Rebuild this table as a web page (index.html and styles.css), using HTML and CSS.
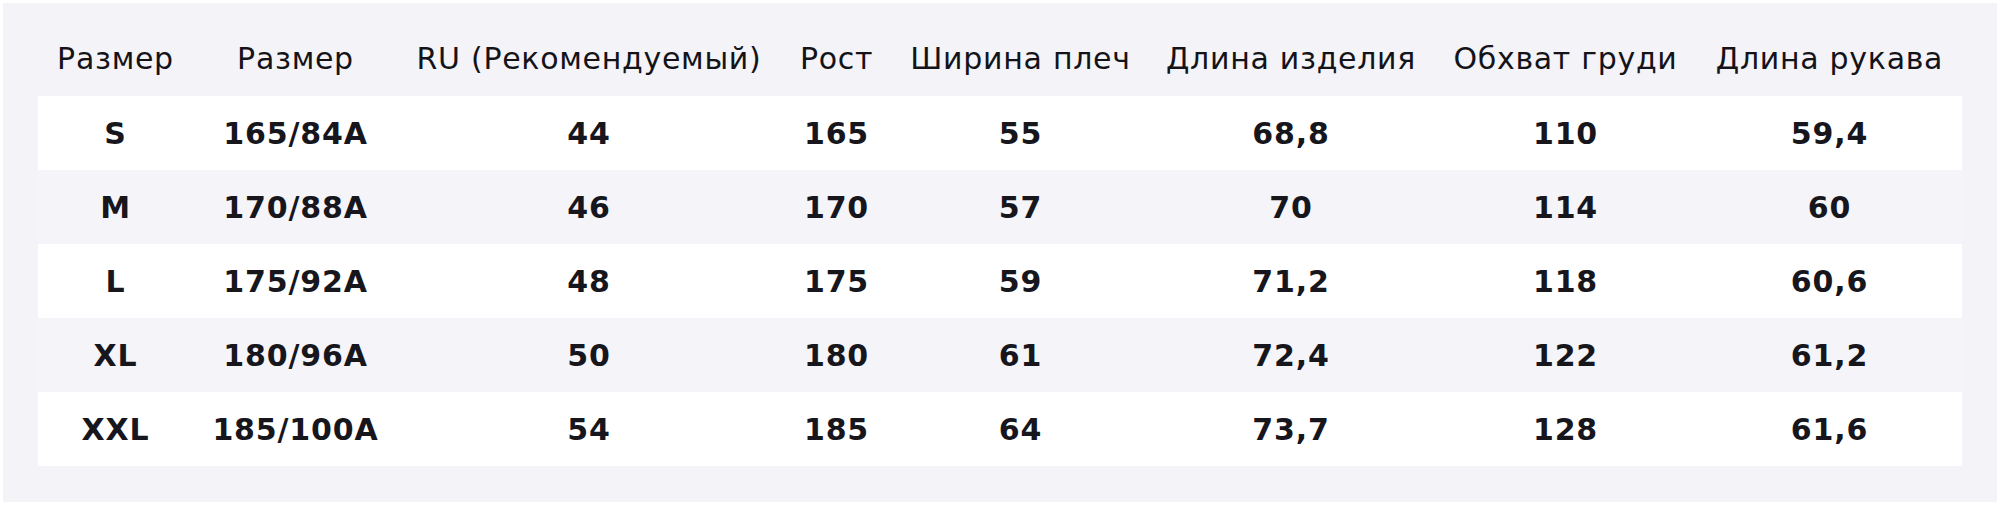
FILE: index.html
```html
<!DOCTYPE html>
<html lang="ru">
<head>
<meta charset="utf-8">
<title>Таблица размеров</title>
<link rel="stylesheet" href="styles.css">
</head>
<body>
<div class="panel">
  <table class="sizes">
    <colgroup>
      <col class="c1"><col class="c2"><col class="c3"><col class="c4">
      <col class="c5"><col class="c6"><col class="c7"><col class="c8">
    </colgroup>
    <thead>
      <tr>
        <th>Размер</th><th>Размер</th><th>RU (Рекомендуемый)</th><th>Рост</th>
        <th>Ширина плеч</th><th>Длина изделия</th><th>Обхват груди</th><th>Длина рукава</th>
      </tr>
    </thead>
    <tbody>
      <tr class="odd"><td>S</td><td>165/84A</td><td>44</td><td>165</td><td>55</td><td>68,8</td><td>110</td><td>59,4</td></tr>
      <tr class="even"><td>M</td><td>170/88A</td><td>46</td><td>170</td><td>57</td><td>70</td><td>114</td><td>60</td></tr>
      <tr class="odd"><td>L</td><td>175/92A</td><td>48</td><td>175</td><td>59</td><td>71,2</td><td>118</td><td>60,6</td></tr>
      <tr class="even"><td>XL</td><td>180/96A</td><td>50</td><td>180</td><td>61</td><td>72,4</td><td>122</td><td>61,2</td></tr>
      <tr class="odd"><td>XXL</td><td>185/100A</td><td>54</td><td>185</td><td>64</td><td>73,7</td><td>128</td><td>61,6</td></tr>
    </tbody>
  </table>
</div>
</body>
</html>
```

FILE: styles.css
```css
html, body {
  margin: 0;
  padding: 0;
  background: #ffffff;
}

body {
  font-family: "DejaVu Sans", "Liberation Sans", sans-serif;
  color: #16161c;
}

.panel {
  margin: 3px;
  width: 1994px;
  height: 499px;
  box-sizing: border-box;
  padding: 18px 35px 36px;
  background: #f3f3f8;
}

.sizes {
  width: 1924px;
  table-layout: fixed;
  border-collapse: collapse;
  border-spacing: 0;
}

.c1 { width: 155px; }
.c2 { width: 205px; }
.c3 { width: 382px; }
.c4 { width: 113px; }
.c5 { width: 255px; }
.c6 { width: 286px; }
.c7 { width: 263px; }
.c8 { width: 265px; }

.sizes th {
  font-weight: normal;
  font-size: 30px;
  letter-spacing: 0.7px;
  line-height: 34px;
  padding: 21px 0 20px;
  text-align: center;
  white-space: nowrap;
  color: #141418;
}

.sizes td {
  font-weight: bold;
  font-size: 30px;
  letter-spacing: 0.85px;
  line-height: 34px;
  padding: 21px 0 19px;
  text-align: center;
  white-space: nowrap;
  color: #16161c;
}

.sizes tr.odd { background: #ffffff; }
.sizes tr.even { background: #f4f4f9; }
```
